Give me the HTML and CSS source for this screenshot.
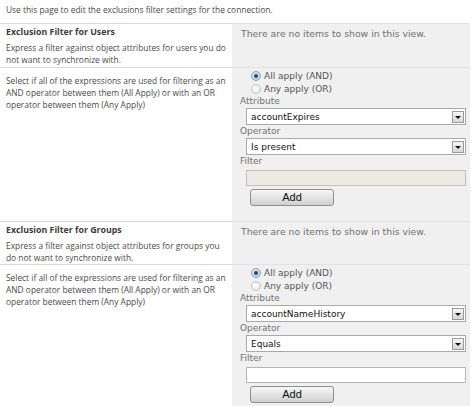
FILE: index.html
```html
<!DOCTYPE html>
<html>
<head>
<meta charset="utf-8">
<link rel="stylesheet" href="styles.css">
</head>
<body>
<div class="page">
  <div class="intro">Use this page to edit the exclusions filter settings for the connection.</div>

  <div class="section">
    <div class="cell left head">
      <div class="title">Exclusion Filter for Users</div>
      <div class="desc">Express a filter against object attributes for users you do not want to synchronize with.</div>
    </div>
    <div class="cell right head">
      <div class="empty">There are no items to show in this view.</div>
    </div>
    <div class="cell left body">
      <div class="desc">Select if all of the expressions are used for filtering as an AND operator between them (All Apply) or with an OR operator between them (Any Apply)</div>
    </div>
    <div class="cell right body">
      <div class="radios">
        <div class="radio-row"><span class="radio checked"></span>All apply (AND)</div>
        <div class="radio-row"><span class="radio"></span>Any apply (OR)</div>
      </div>
      <div class="label">Attribute</div>
      <div class="select"><span class="value">accountExpires</span><span class="arrow"></span></div>
      <div class="label">Operator</div>
      <div class="select"><span class="value">Is present</span><span class="arrow"></span></div>
      <div class="label">Filter</div>
      <div class="textbox disabled"></div>
      <div class="button">Add</div>
    </div>
  </div>

  <div class="section second">
    <div class="cell left head">
      <div class="title">Exclusion Filter for Groups</div>
      <div class="desc">Express a filter against object attributes for groups you do not want to synchronize with.</div>
    </div>
    <div class="cell right head">
      <div class="empty">There are no items to show in this view.</div>
    </div>
    <div class="cell left body">
      <div class="desc">Select if all of the expressions are used for filtering as an AND operator between them (All Apply) or with an OR operator between them (Any Apply)</div>
    </div>
    <div class="cell right body">
      <div class="radios">
        <div class="radio-row"><span class="radio checked"></span>All apply (AND)</div>
        <div class="radio-row"><span class="radio"></span>Any apply (OR)</div>
      </div>
      <div class="label">Attribute</div>
      <div class="select"><span class="value">accountNameHistory</span><span class="arrow"></span></div>
      <div class="label">Operator</div>
      <div class="select"><span class="value">Equals</span><span class="arrow"></span></div>
      <div class="label">Filter</div>
      <div class="textbox"></div>
      <div class="button">Add</div>
    </div>
  </div>
</div>
</body>
</html>
```

FILE: styles.css
```css
html, body {
  margin: 0;
  padding: 0;
  background: #ffffff;
  height: 100%;
  overflow: hidden;
}
.page {
  width: 474px;
  height: 406px;
  font-family: "Open Sans", "Noto Sans", sans-serif;
  font-size: 8.4px;
  color: #4a4a4a;
}
.intro {
  height: 23px;
  box-sizing: border-box;
  padding: 4px 0 0 6px;
  line-height: 12px;
}
.section {
  display: grid;
  grid-template-columns: 232px 238px;
  width: 470px;
}
.cell {
  border-top: 1px solid #d9d9d9;
  box-sizing: border-box;
}
.left {
  padding-left: 6px;
  padding-right: 5px;
}
.right {
  background: #f0f0f0;
  border-top-color: #e2e2e2;
}
.head {
  height: 44px;
}
.second .head {
  height: 43px;
}
.left.head {
  padding-top: 2px;
}
.title {
  font-weight: bold;
  font-size: 8.8px;
  color: #3c3c3c;
  line-height: 12px;
}
.desc {
  line-height: 12px;
}
.left.head .desc {
  margin-top: 4px;
}
.left.body {
  padding-top: 7px;
}
.empty {
  font-family: "DejaVu Sans", Verdana, sans-serif;
  font-size: 9.3px;
  color: #707070;
  padding: 3px 0 0 9px;
  line-height: 13px;
}
.right.body {
  height: 154px;
  padding: 0;
  font-family: "DejaVu Sans", Verdana, sans-serif;
  font-size: 9px;
  color: #333;
}
.second .right.body {
  height: 142px;
}
.radios {
  padding-top: 1px;
  padding-left: 19px;
}
.radio-row {
  display: flex;
  align-items: center;
  height: 13px;
  gap: 3px;
  color: #555;
}
.radio {
  width: 8px;
  height: 8px;
  border-radius: 50%;
  border: 1px solid #c4c4c4;
  background: radial-gradient(circle at 40% 40%, #ffffff, #e2e2e2);
  box-sizing: content-box;
  display: flex;
  align-items: center;
  justify-content: center;
}
.radio.checked {
  border-color: #8aa5c0;
  background: radial-gradient(circle at 40% 40%, #e6f0fa, #a9c4e0);
}
.radio.checked::after {
  content: "";
  width: 4px;
  height: 4px;
  border-radius: 50%;
  background: #2a4670;
}
.label {
  padding-left: 8px;
  height: 13px;
  line-height: 13px;
  color: #737373;
}
.select {
  margin: 0 4px 0 14px;
  height: 17px;
  border: 1px solid #a9a9a9;
  background: #fff;
  box-sizing: border-box;
  display: flex;
  align-items: center;
  justify-content: space-between;
  color: #111;
}
.value {
  padding-left: 4px;
}
.arrow {
  width: 12px;
  height: 12px;
  margin-right: 1px;
  box-sizing: border-box;
  border: 1px solid #9a9a9a;
  background: linear-gradient(#f6f6f6, #d7d7d7);
  display: flex;
  align-items: center;
  justify-content: center;
}
.arrow::after {
  content: "";
  width: 0;
  height: 0;
  border-left: 3px solid transparent;
  border-right: 3px solid transparent;
  border-top: 3px solid #111;
  margin-top: 1px;
}
.textbox {
  margin: 2px 4px 0 14px;
  height: 16px;
  border: 1px solid #b5b5b5;
  background: #fff;
  box-sizing: border-box;
}
.textbox.disabled {
  background: #ebebe4;
  border-color: #c0c0b8;
}
.button {
  margin: 3px 0 0 18px;
  width: 84px;
  height: 17px;
  box-sizing: border-box;
  border: 1px solid #8f8f8f;
  border-radius: 3px;
  background: linear-gradient(#f7f7f7, #e2e2e2 55%, #d0d0d0);
  font-family: "Liberation Sans", Arial, sans-serif;
  font-size: 11px;
  color: #111;
  text-align: center;
  line-height: 15px;
}
```
